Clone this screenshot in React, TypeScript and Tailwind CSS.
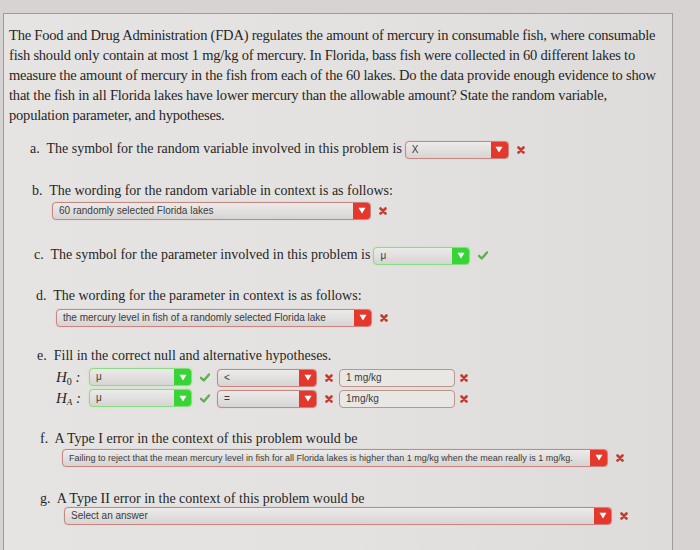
import React from 'react';

type Status = 'bad' | 'good';

function Mark({ status }: { status: Status }) {
  if (status === 'good') {
    return (
      <svg width="10" height="9" viewBox="0 0 10 9" className="shrink-0">
        <path d="M1 4.8 L3.8 7.5 L9 1.5" fill="none" stroke="#5fae52" strokeWidth="2.4" strokeLinecap="round" strokeLinejoin="round" />
      </svg>
    );
  }
  return (
    <svg width="8" height="8" viewBox="0 0 8 8" className="shrink-0">
      <path d="M1.5 1.5 L6.5 6.5 M6.5 1.5 L1.5 6.5" stroke="#c43d33" strokeWidth="2.6" strokeLinecap="round" />
    </svg>
  );
}

function Select({
  value,
  width,
  status,
  textSize = 'text-[10px]',
}: {
  value: string;
  width: string;
  status: Status;
  textSize?: string;
}) {
  const good = status === 'good';
  return (
    <span className="inline-flex items-center align-middle">
      <span
        className={
          'inline-flex h-[18px] items-stretch rounded-[4px] border bg-gradient-to-b from-[#ecebea] to-[#d7d5d3] ' +
          width +
          (good ? ' border-[#8bdc86] shadow-[0_0_2px_#a6eaa0]' : ' border-[#c98580] shadow-[0_0_1px_#d79b95]')
        }
      >
        <span
          className={
            'flex-1 overflow-hidden whitespace-nowrap pl-[6px] leading-[16px] text-[#3b3b3b] font-["Liberation_Sans",Arial,sans-serif] ' +
            textSize
          }
        >
          {value}
        </span>
        <span
          className={
            'flex w-[17px] shrink-0 items-center justify-center rounded-r-[3px] ' + (good ? 'bg-[#38d435]' : 'bg-[#e4382c]')
          }
        >
          <svg width="8" height="7" viewBox="0 0 8 7">
            <path d="M0.5 0.8 H7.5 L4 6.4 Z" fill="#ffffff" />
          </svg>
        </span>
      </span>
      <span className="ml-[8px] inline-flex">
        <Mark status={status} />
      </span>
    </span>
  );
}

function TextBox({ value, width }: { value: string; width: string }) {
  return (
    <span className="inline-flex items-center align-middle">
      <span
        className={
          'inline-flex h-[18px] items-center rounded-[4px] border border-[#b9958c] bg-[#e9e7e4] pl-[6px] text-[10px] text-[#3b3b3b] font-["Liberation_Sans",Arial,sans-serif] ' +
          width
        }
      >
        {value}
      </span>
      <span className="ml-[5px] inline-flex">
        <Mark status="bad" />
      </span>
    </span>
  );
}

export default function App() {
  return (
    <div className="h-[550px] w-[700px] overflow-hidden bg-[#d6d3d2] pt-[13px] pl-[3px] font-['Liberation_Serif','Times_New_Roman',serif] text-[#262626]">
      <div className="h-[540px] w-[670px] border border-[#9d9b99] bg-gradient-to-r from-[#e6e4e2] via-[#e4e2e0] to-[#dedcda]">
        <p className="whitespace-nowrap pl-[5px] pt-[11px] text-[14.5px] leading-[20px] tracking-[-0.2px]">
          The Food and Drug Administration (FDA) regulates the amount of mercury in consumable fish, where consumable
          <br />
          fish should only contain at most 1 mg/kg of mercury. In Florida, bass fish were collected in 60 different lakes to
          <br />
          measure the amount of mercury in the fish from each of the 60 lakes. Do the data provide enough evidence to show
          <br />
          that the fish in all Florida lakes have lower mercury than the allowable amount? State the random variable,
          <br />
          population parameter, and hypotheses.
        </p>

        <div className="mt-[14px] flex items-center pl-[26px] text-[14px] leading-[20px]">
          <span>a.&nbsp; The symbol for the random variable involved in this problem is</span>
          <span className="ml-[3px]">
            <Select value="X" width="w-[104px]" status="bad" />
          </span>
        </div>

        <div className="mt-[22px] pl-[28px] text-[14px] leading-[20px]">
          <div>b.&nbsp; The wording for the random variable in context is as follows:</div>
          <div className="mt-[-1px] pl-[20px]">
            <Select value="60 randomly selected Florida lakes" width="w-[319px]" status="bad" />
          </div>
        </div>

        <div className="mt-[25px] flex items-center pl-[30px] text-[14px] leading-[20px]">
          <span>c.&nbsp; The symbol for the parameter involved in this problem is</span>
          <span className="ml-[3px]">
            <Select value="μ" width="w-[97px]" status="good" />
          </span>
        </div>

        <div className="mt-[21px] pl-[32px] text-[14px] leading-[20px]">
          <div>d.&nbsp; The wording for the parameter in context is as follows:</div>
          <div className="mt-[1px] pl-[20px]">
            <Select value="the mercury level in fish of a randomly selected Florida lake" width="w-[316px]" status="bad" />
          </div>
        </div>

        <div className="mt-[19px] pl-[33px] text-[14px] leading-[20px]">
          <div>e.&nbsp; Fill in the correct null and alternative hypotheses.</div>
          <div className="mt-[1px] flex flex-col gap-[1px] pl-[19px]">
            <div className="flex items-center">
              <span className="w-[33px] italic text-[15px]">
                H<sub className="text-[10px] not-italic">0</sub> :
              </span>
              <Select value="μ" width="w-[103px]" status="good" />
              <span className="ml-[7px]">
                <Select value="<" width="w-[100px]" status="bad" />
              </span>
              <span className="ml-[6px]">
                <TextBox value="1 mg/kg" width="w-[116px]" />
              </span>
            </div>
            <div className="flex items-center">
              <span className="w-[33px] italic text-[15px]">
                H<sub className="text-[9px]">A</sub> :
              </span>
              <Select value="μ" width="w-[103px]" status="good" />
              <span className="ml-[7px]">
                <Select value="=" width="w-[100px]" status="bad" />
              </span>
              <span className="ml-[6px]">
                <TextBox value="1mg/kg" width="w-[116px]" />
              </span>
            </div>
          </div>
        </div>

        <div className="mt-[21px] pl-[36px] text-[14px] leading-[20px]">
          <div>f.&nbsp; A Type I error in the context of this problem would be</div>
          <div className="mt-[-2px] pl-[22px]">
            <Select
              value="Failing to reject that the mean mercury level in fish for all Florida lakes is higher than 1 mg/kg when the mean really is 1 mg/kg."
              width="w-[546px]"
              status="bad"
              textSize="text-[9px]"
            />
          </div>
        </div>

        <div className="mt-[22px] pl-[36px] text-[14px] leading-[20px]">
          <div>g.&nbsp; A Type II error in the context of this problem would be</div>
          <div className="mt-[-4px] pl-[24px]">
            <Select value="Select an answer" width="w-[548px]" status="bad" />
          </div>
        </div>
      </div>
    </div>
  );
}
